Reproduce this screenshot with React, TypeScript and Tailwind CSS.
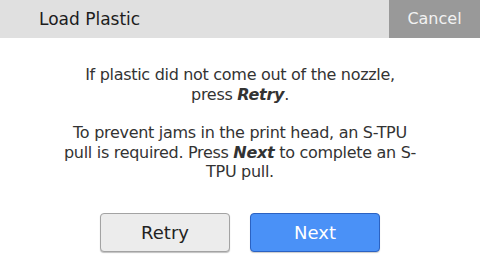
const App = () => {
  return (
    <div className="w-[480px] h-[263px] bg-white flex flex-col font-['DejaVu_Sans',sans-serif] overflow-hidden">
      <header className="h-[38px] flex bg-[#e0e0e0]">
        <div className="flex-1 pl-[39px] text-[17px] leading-[38px] text-[#1c1c1c]">Load Plastic</div>
        <button className="w-[91px] bg-[#999999] text-[#f2f2f2] text-[16px] leading-[38px]">Cancel</button>
      </header>

      <div className="px-[64px] text-center text-[16px] tracking-[-0.3px] leading-[19.5px] text-[#333]">
        <p className="mt-[27px]">
          If plastic did not come out of the nozzle, press <b className="italic">Retry</b>.
        </p>
        <p className="mt-[19px]">
          To prevent jams in the print head, an S-TPU pull is required. Press <b className="italic">Next</b> to
          complete an S-TPU pull.
        </p>
      </div>

      <div className="mt-auto mb-[11px] flex justify-center gap-[20px]">
        <button className="w-[130px] h-[39px] rounded-[4px] border border-[#a3a3a3] bg-[#ececec] text-[18px] text-[#222] shadow-[0_1px_1px_rgba(0,0,0,0.25)]">
          Retry
        </button>
        <button className="w-[130px] h-[39px] rounded-[4px] border border-[#2b62c2] bg-[#4a91f7] text-[18px] text-white shadow-[0_1px_1px_rgba(0,0,0,0.2)]">
          Next
        </button>
      </div>
    </div>
  );
};

export default App;
